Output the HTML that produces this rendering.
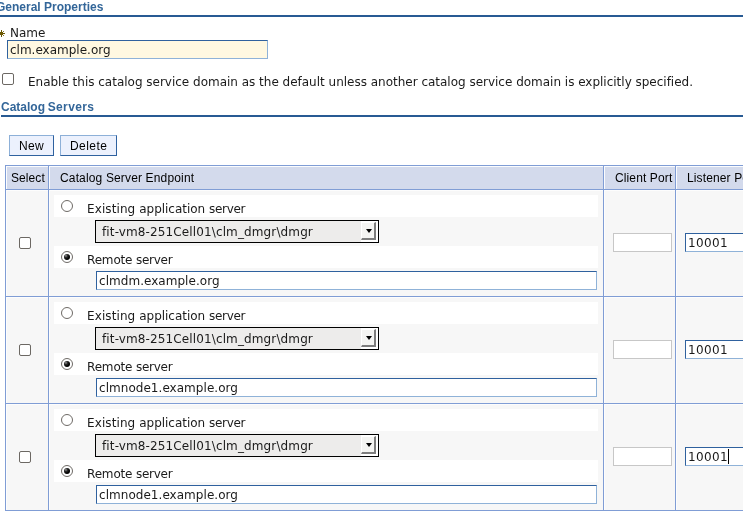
<!DOCTYPE html>
<html><head><meta charset="utf-8"><title>Catalog service domain</title>
<style>
html,body{margin:0;padding:0;background:#fff;}
body{width:743px;height:515px;overflow:hidden;}
#wrap{position:relative;width:743px;height:515px;overflow:hidden;will-change:transform;font-family:"DejaVu Sans","Liberation Sans",sans-serif;font-size:12px;color:#1a1a1a;}
.a{position:absolute;white-space:nowrap;}
.h{font-family:"Liberation Sans",sans-serif;font-weight:bold;font-size:12px;color:#336699;line-height:14px;}
.hl{background:#285a93;height:2px;}
.t{line-height:14px;}
.ar{font-family:"Liberation Sans",sans-serif;font-size:12px;line-height:14px;color:#000;}
.btn{box-sizing:border-box;background:#ecf1fd;border:1px solid;border-color:#8db0d8 #2e619f #2e619f #8db0d8;}
.th{background:#d3daec;box-sizing:border-box;border-top:1px solid #fbfcfe;border-left:1px solid #fbfcfe;}
.td{background:#f7f7f7;box-sizing:border-box;border-top:1px solid #fdfdfd;border-left:1px solid #fdfdfd;}
.w{background:#fff;}
.vl{background:#809dd5;width:1px;}
.hline{background:#809dd5;height:1px;}
.cb{box-sizing:border-box;width:12px;height:12px;background:#fff;border:1px solid #6c6863;border-radius:2px;}
.rd{box-sizing:border-box;width:12px;height:12px;background:#fff;border:1px solid #6e6a66;border-radius:50%;}
.rd.on:after{content:"";position:absolute;left:2px;top:2px;width:6px;height:6px;border-radius:50%;background:radial-gradient(circle at 32% 30%,#9a9a9a 0,#2a2a2a 28%,#000 60%);}
.inp{box-sizing:border-box;background:#fff;border:1px solid;border-color:#2f619e #8fb2d8 #8fb2d8 #2f619e;}
.inpg{box-sizing:border-box;background:#fff;border:1px solid #c7c7c7;}
.sel{box-sizing:border-box;background:#edeceb;border:1px solid #000;}
.selw{background:#fff;}
.selb{box-sizing:border-box;background:#f4f4f2;border-style:solid;border-width:1px 2px 2px 1px;border-color:#fff #7d7d7d #7d7d7d #fff;}
.tri{width:0;height:0;border-left:3.5px solid transparent;border-right:3.5px solid transparent;border-top:4px solid #000;}
.caret{background:#000;width:1px;}
</style></head>
<body>
<div id="wrap">
<div class="a h" id="h1" style="left:-4px;top:0px;">General Properties</div>
<div class="a hl" style="left:0px;top:15px;width:743px;"></div>
<svg class="a" style="left:-2px;top:30px" width="7" height="7" viewBox="0 0 7 7" shape-rendering="crispEdges"><g fill="#6b5800"><rect x="3" y="0" width="1" height="7"/><rect x="0" y="3" width="7" height="1"/><rect x="2" y="2" width="3" height="3"/><rect x="1" y="1" width="1" height="1" opacity=".8"/><rect x="5" y="1" width="1" height="1" opacity=".8"/><rect x="1" y="5" width="1" height="1" opacity=".8"/><rect x="5" y="5" width="1" height="1" opacity=".8"/></g></svg>
<div class="a t" id="name" style="left:10px;top:26px;">Name</div>
<div class="a inp" style="left:7px;top:40px;width:261px;height:19px;background:#fff8e1;"></div>
<div class="a t" id="i0" style="left:10px;top:43px;">clm.example.org</div>
<div class="a cb" style="left:2px;top:73px;"></div>
<div class="a t" id="en" style="left:28px;top:75px;letter-spacing:-0.01px;">Enable this catalog service domain as the default unless another catalog service domain is explicitly specified.</div>
<div class="a h" id="h2" style="left:1px;top:100px;">Catalog<span style="margin-left:-1px;letter-spacing:.36px"> Servers</span></div>
<div class="a hl" style="left:1px;top:115px;width:742px;"></div>
<div class="a btn" style="left:9px;top:135px;width:45px;height:21px;"></div>
<div class="a btn" style="left:60px;top:135px;width:57px;height:21px;"></div>
<div class="a ar" id="bnew" style="left:19px;top:139px;letter-spacing:0.3px;">New</div>
<div class="a ar" id="bdel" style="left:70px;top:139px;letter-spacing:0.43px;">Delete</div>
<div class="a th" style="left:6px;top:166px;width:42px;height:23px;"></div>
<div class="a th" style="left:49px;top:166px;width:554px;height:23px;"></div>
<div class="a th" style="left:604px;top:166px;width:71px;height:23px;"></div>
<div class="a th" style="left:676px;top:166px;width:67px;height:23px;"></div>
<div class="a td" style="left:6px;top:190px;width:42px;height:106px;"></div>
<div class="a td" style="left:49px;top:190px;width:554px;height:106px;"></div>
<div class="a td" style="left:604px;top:190px;width:71px;height:106px;"></div>
<div class="a td" style="left:676px;top:190px;width:67px;height:106px;"></div>
<div class="a td" style="left:6px;top:297px;width:42px;height:106px;"></div>
<div class="a td" style="left:49px;top:297px;width:554px;height:106px;"></div>
<div class="a td" style="left:604px;top:297px;width:71px;height:106px;"></div>
<div class="a td" style="left:676px;top:297px;width:67px;height:106px;"></div>
<div class="a td" style="left:6px;top:404px;width:42px;height:106px;"></div>
<div class="a td" style="left:49px;top:404px;width:554px;height:106px;"></div>
<div class="a td" style="left:604px;top:404px;width:71px;height:106px;"></div>
<div class="a td" style="left:676px;top:404px;width:67px;height:106px;"></div>
<div class="a hline" style="left:5px;top:165px;width:738px;"></div>
<div class="a hline" style="left:5px;top:189px;width:738px;"></div>
<div class="a hline" style="left:5px;top:296px;width:738px;"></div>
<div class="a hline" style="left:5px;top:403px;width:738px;"></div>
<div class="a hline" style="left:5px;top:510px;width:738px;"></div>
<div class="a vl" style="left:5px;top:165px;height:346px;"></div>
<div class="a vl" style="left:48px;top:165px;height:346px;"></div>
<div class="a vl" style="left:603px;top:165px;height:346px;"></div>
<div class="a vl" style="left:675px;top:165px;height:346px;"></div>
<div class="a ar" id="c0" style="left:11px;top:171px;letter-spacing:0.08px;">Select</div>
<div class="a ar" id="c1" style="left:60px;top:171px;letter-spacing:0.15px;">Catalog Server Endpoint</div>
<div class="a ar" id="c2" style="left:615px;top:171px;letter-spacing:0.12px;">Client Port</div>
<div class="a ar" id="c3" style="left:687px;top:171px;letter-spacing:0.13px;">Listener Port</div>
<div class="a cb" style="left:19px;top:237px;"></div>
<div class="a w" style="left:54px;top:195px;width:544px;height:22px;"></div>
<div class="a w" style="left:54px;top:246px;width:544px;height:22px;"></div>
<div class="a rd" style="left:61px;top:200px;"></div>
<div class="a t" id="ex0" style="left:87px;top:202px;"><span style="letter-spacing:.1px">Existing </span><span style="letter-spacing:-.03px">application </span><span style="letter-spacing:-.28px">server</span></div>
<div class="a sel" style="left:95px;top:220px;width:284px;height:23px;"></div>
<div class="a selw" style="left:361px;top:221px;width:17px;height:21px;"></div>
<div class="a selb" style="left:361px;top:222px;width:15px;height:18px;"></div>
<div class="a tri" style="left:365.5px;top:229px;"></div>
<div class="a t" id="fit0" style="left:102px;top:225px;letter-spacing:0.125px;">fit-vm8-251Cell01\clm_dmgr\dmgr</div>
<div class="a rd on" style="left:61px;top:251px;"></div>
<div class="a t" id="rs0" style="left:87px;top:253px;"><span style="letter-spacing:-.16px">Remote </span><span style="letter-spacing:-.28px">server</span></div>
<div class="a inp" style="left:96px;top:271px;width:501px;height:19px;"></div>
<div class="a t" id="ep0" style="left:99px;top:274px;letter-spacing:0.04px;">clmdm.example.org</div>
<div class="a inpg" style="left:613px;top:233px;width:59px;height:19px;"></div>
<div class="a inp" style="left:685px;top:233px;width:70px;height:19px;"></div>
<div class="a t" id="port0" style="left:688px;top:236px;letter-spacing:0.37px;">10001</div>
<div class="a cb" style="left:19px;top:344px;"></div>
<div class="a w" style="left:54px;top:302px;width:544px;height:22px;"></div>
<div class="a w" style="left:54px;top:353px;width:544px;height:22px;"></div>
<div class="a rd" style="left:61px;top:307px;"></div>
<div class="a t" id="ex1" style="left:87px;top:309px;"><span style="letter-spacing:.1px">Existing </span><span style="letter-spacing:-.03px">application </span><span style="letter-spacing:-.28px">server</span></div>
<div class="a sel" style="left:95px;top:327px;width:284px;height:23px;"></div>
<div class="a selw" style="left:361px;top:328px;width:17px;height:21px;"></div>
<div class="a selb" style="left:361px;top:329px;width:15px;height:18px;"></div>
<div class="a tri" style="left:365.5px;top:336px;"></div>
<div class="a t" id="fit1" style="left:102px;top:332px;letter-spacing:0.125px;">fit-vm8-251Cell01\clm_dmgr\dmgr</div>
<div class="a rd on" style="left:61px;top:358px;"></div>
<div class="a t" id="rs1" style="left:87px;top:360px;"><span style="letter-spacing:-.16px">Remote </span><span style="letter-spacing:-.28px">server</span></div>
<div class="a inp" style="left:96px;top:378px;width:501px;height:19px;"></div>
<div class="a t" id="ep1" style="left:99px;top:381px;letter-spacing:0.04px;">clmnode1.example.org</div>
<div class="a inpg" style="left:613px;top:340px;width:59px;height:19px;"></div>
<div class="a inp" style="left:685px;top:340px;width:70px;height:19px;"></div>
<div class="a t" id="port1" style="left:688px;top:343px;letter-spacing:0.37px;">10001</div>
<div class="a cb" style="left:19px;top:451px;"></div>
<div class="a w" style="left:54px;top:409px;width:544px;height:22px;"></div>
<div class="a w" style="left:54px;top:460px;width:544px;height:22px;"></div>
<div class="a rd" style="left:61px;top:414px;"></div>
<div class="a t" id="ex2" style="left:87px;top:416px;"><span style="letter-spacing:.1px">Existing </span><span style="letter-spacing:-.03px">application </span><span style="letter-spacing:-.28px">server</span></div>
<div class="a sel" style="left:95px;top:434px;width:284px;height:23px;"></div>
<div class="a selw" style="left:361px;top:435px;width:17px;height:21px;"></div>
<div class="a selb" style="left:361px;top:436px;width:15px;height:18px;"></div>
<div class="a tri" style="left:365.5px;top:443px;"></div>
<div class="a t" id="fit2" style="left:102px;top:439px;letter-spacing:0.125px;">fit-vm8-251Cell01\clm_dmgr\dmgr</div>
<div class="a rd on" style="left:61px;top:465px;"></div>
<div class="a t" id="rs2" style="left:87px;top:467px;"><span style="letter-spacing:-.16px">Remote </span><span style="letter-spacing:-.28px">server</span></div>
<div class="a inp" style="left:96px;top:485px;width:501px;height:19px;"></div>
<div class="a t" id="ep2" style="left:99px;top:488px;letter-spacing:0.04px;">clmnode1.example.org</div>
<div class="a inpg" style="left:613px;top:447px;width:59px;height:19px;"></div>
<div class="a inp" style="left:685px;top:447px;width:70px;height:19px;"></div>
<div class="a t" id="port2" style="left:688px;top:450px;letter-spacing:0.37px;">10001</div>
<div class="a caret" style="left:728px;top:449px;height:15px;"></div>
</div>
</body></html>
